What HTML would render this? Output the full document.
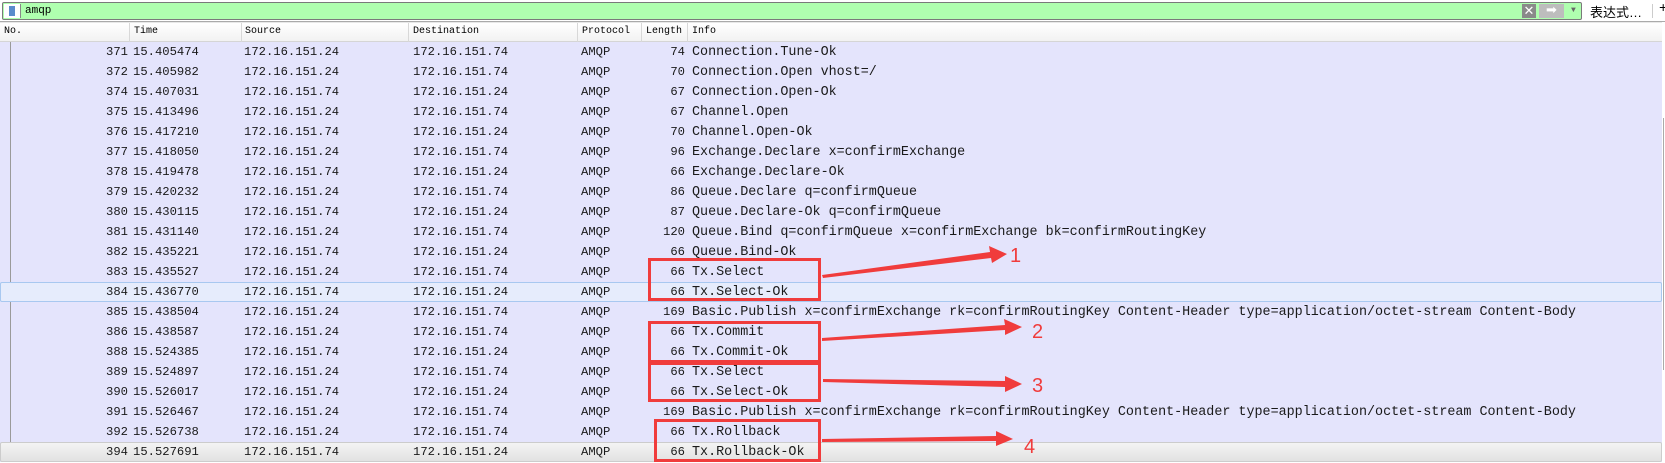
<!DOCTYPE html>
<html><head><meta charset="utf-8">
<style>
*{margin:0;padding:0;box-sizing:border-box}
body{width:1665px;height:462px;overflow:hidden;background:#fff;position:relative;font-family:"Liberation Mono",monospace}
.fb{position:absolute;left:2px;top:2px;width:1580px;height:18px;background:#afffaf;border:1px solid #7a7a7a;border-radius:2px}
.fb .bm{position:absolute;left:1px;top:1px;width:17px;height:14px;background:#fff;border-right:1px solid #888}
.fb .bm i{position:absolute;left:5px;top:2px;width:6px;height:10px;background:#5a8ccc}
.fb .t{position:absolute;left:22px;top:2px;font-size:11px;font-family:"Liberation Mono",monospace}
.hdr{position:absolute;left:0;top:22px;width:1662px;height:20px;background:linear-gradient(#fff,#f2f2f2);border-bottom:1px solid #d5d5d5;border-top:1px solid #e8e8e8}
.hdr span{position:absolute;top:3px;font-size:10px;font-family:"Liberation Mono","Noto Sans CJK SC",monospace}
.hdr b{position:absolute;top:0;width:1px;height:19px;background:#d8d8d8}
.rows{position:absolute;left:0;top:42px;width:1662px;height:420px;background:#e4e4fc}
.r{position:absolute;left:0;width:1662px;height:20px;font-size:12.2px;line-height:20px;color:#1a1a1a;white-space:pre}
.r span{position:absolute;top:0}
.r span:last-child{font-size:13.4px;top:1px}
.n{right:1534px;text-align:right}
.sel{background:#e6ecfc;border:1px solid #a8c8f0;border-radius:2px}
.gr{background:linear-gradient(#f4f4f4,#e2e2e2);border:1px solid #ccc;border-radius:2px}
.vl{position:absolute;left:10px;top:42px;width:1px;height:420px;background:#9a9a9a}
.box{position:absolute;border:3px solid #f03c3c}
</style></head><body>
<div class="fb"><div class="bm"><i></i></div><div class="t">amqp</div></div>
<div style="position:absolute;left:1522px;top:4px;width:14px;height:14px;background:#8a8a8a;color:#fff;font-size:13px;line-height:14px;text-align:center;font-family:'Liberation Sans'">✕</div>
<div style="position:absolute;left:1539px;top:4px;width:25px;height:14px;background:#bdbdbd;color:#fff;font-size:13px;line-height:14px;text-align:center">➡</div>
<div style="position:absolute;left:1571px;top:6px;font-size:8px;color:#666">▼</div>
<div style="position:absolute;left:1590px;top:2px;font-size:13px;font-family:'Liberation Sans','Noto Sans CJK SC',sans-serif">表达式…</div>
<div style="position:absolute;left:1652px;top:4px;width:1px;height:14px;background:#ccc"></div>
<div style="position:absolute;left:1659px;top:1px;font-size:14px">+</div>
<div style="position:absolute;left:0;top:21px;width:1665px;height:1px;background:#aaa"></div>
<div class="hdr">
<span style="left:4px">No.</span><b style="left:129px"></b>
<span style="left:134px">Time</span><b style="left:241px"></b>
<span style="left:245px">Source</span><b style="left:408px"></b>
<span style="left:413px">Destination</span><b style="left:577px"></b>
<span style="left:582px">Protocol</span><b style="left:641px"></b>
<span style="left:646px">Length</span><b style="left:687px"></b>
<span style="left:692px">Info</span>
</div>
<div class="rows"></div>
<div class="vl"></div>
<div style="position:absolute;left:1663px;top:118px;width:1px;height:252px;background:#aaa"></div>
<div class="r" style="top:42px"><span class="n">371</span><span style="left:133px">15.405474</span><span style="left:244px">172.16.151.24</span><span style="left:413px">172.16.151.74</span><span style="left:581px">AMQP</span><span style="right:977px">74</span><span style="left:692px">Connection.Tune-Ok</span></div>
<div class="r" style="top:62px"><span class="n">372</span><span style="left:133px">15.405982</span><span style="left:244px">172.16.151.24</span><span style="left:413px">172.16.151.74</span><span style="left:581px">AMQP</span><span style="right:977px">70</span><span style="left:692px">Connection.Open vhost=/</span></div>
<div class="r" style="top:82px"><span class="n">374</span><span style="left:133px">15.407031</span><span style="left:244px">172.16.151.74</span><span style="left:413px">172.16.151.24</span><span style="left:581px">AMQP</span><span style="right:977px">67</span><span style="left:692px">Connection.Open-Ok</span></div>
<div class="r" style="top:102px"><span class="n">375</span><span style="left:133px">15.413496</span><span style="left:244px">172.16.151.24</span><span style="left:413px">172.16.151.74</span><span style="left:581px">AMQP</span><span style="right:977px">67</span><span style="left:692px">Channel.Open</span></div>
<div class="r" style="top:122px"><span class="n">376</span><span style="left:133px">15.417210</span><span style="left:244px">172.16.151.74</span><span style="left:413px">172.16.151.24</span><span style="left:581px">AMQP</span><span style="right:977px">70</span><span style="left:692px">Channel.Open-Ok</span></div>
<div class="r" style="top:142px"><span class="n">377</span><span style="left:133px">15.418050</span><span style="left:244px">172.16.151.24</span><span style="left:413px">172.16.151.74</span><span style="left:581px">AMQP</span><span style="right:977px">96</span><span style="left:692px">Exchange.Declare x=confirmExchange</span></div>
<div class="r" style="top:162px"><span class="n">378</span><span style="left:133px">15.419478</span><span style="left:244px">172.16.151.74</span><span style="left:413px">172.16.151.24</span><span style="left:581px">AMQP</span><span style="right:977px">66</span><span style="left:692px">Exchange.Declare-Ok</span></div>
<div class="r" style="top:182px"><span class="n">379</span><span style="left:133px">15.420232</span><span style="left:244px">172.16.151.24</span><span style="left:413px">172.16.151.74</span><span style="left:581px">AMQP</span><span style="right:977px">86</span><span style="left:692px">Queue.Declare q=confirmQueue</span></div>
<div class="r" style="top:202px"><span class="n">380</span><span style="left:133px">15.430115</span><span style="left:244px">172.16.151.74</span><span style="left:413px">172.16.151.24</span><span style="left:581px">AMQP</span><span style="right:977px">87</span><span style="left:692px">Queue.Declare-Ok q=confirmQueue</span></div>
<div class="r" style="top:222px"><span class="n">381</span><span style="left:133px">15.431140</span><span style="left:244px">172.16.151.24</span><span style="left:413px">172.16.151.74</span><span style="left:581px">AMQP</span><span style="right:977px">120</span><span style="left:692px">Queue.Bind q=confirmQueue x=confirmExchange bk=confirmRoutingKey</span></div>
<div class="r" style="top:242px"><span class="n">382</span><span style="left:133px">15.435221</span><span style="left:244px">172.16.151.74</span><span style="left:413px">172.16.151.24</span><span style="left:581px">AMQP</span><span style="right:977px">66</span><span style="left:692px">Queue.Bind-Ok</span></div>
<div class="r" style="top:262px"><span class="n">383</span><span style="left:133px">15.435527</span><span style="left:244px">172.16.151.24</span><span style="left:413px">172.16.151.74</span><span style="left:581px">AMQP</span><span style="right:977px">66</span><span style="left:692px">Tx.Select</span></div>
<div class="r sel" style="top:282px;left:0"><span class="n" style="right:1533px;top:-1px">384</span><span style="left:132px;top:-1px">15.436770</span><span style="left:243px;top:-1px">172.16.151.74</span><span style="left:412px;top:-1px">172.16.151.24</span><span style="left:580px;top:-1px">AMQP</span><span style="right:976px;top:-1px">66</span><span style="left:691px;top:0">Tx.Select-Ok</span></div>
<div class="r" style="top:302px"><span class="n">385</span><span style="left:133px">15.438504</span><span style="left:244px">172.16.151.24</span><span style="left:413px">172.16.151.74</span><span style="left:581px">AMQP</span><span style="right:977px">169</span><span style="left:692px">Basic.Publish x=confirmExchange rk=confirmRoutingKey Content-Header type=application/octet-stream Content-Body</span></div>
<div class="r" style="top:322px"><span class="n">386</span><span style="left:133px">15.438587</span><span style="left:244px">172.16.151.24</span><span style="left:413px">172.16.151.74</span><span style="left:581px">AMQP</span><span style="right:977px">66</span><span style="left:692px">Tx.Commit</span></div>
<div class="r" style="top:342px"><span class="n">388</span><span style="left:133px">15.524385</span><span style="left:244px">172.16.151.74</span><span style="left:413px">172.16.151.24</span><span style="left:581px">AMQP</span><span style="right:977px">66</span><span style="left:692px">Tx.Commit-Ok</span></div>
<div class="r" style="top:362px"><span class="n">389</span><span style="left:133px">15.524897</span><span style="left:244px">172.16.151.24</span><span style="left:413px">172.16.151.74</span><span style="left:581px">AMQP</span><span style="right:977px">66</span><span style="left:692px">Tx.Select</span></div>
<div class="r" style="top:382px"><span class="n">390</span><span style="left:133px">15.526017</span><span style="left:244px">172.16.151.74</span><span style="left:413px">172.16.151.24</span><span style="left:581px">AMQP</span><span style="right:977px">66</span><span style="left:692px">Tx.Select-Ok</span></div>
<div class="r" style="top:402px"><span class="n">391</span><span style="left:133px">15.526467</span><span style="left:244px">172.16.151.24</span><span style="left:413px">172.16.151.74</span><span style="left:581px">AMQP</span><span style="right:977px">169</span><span style="left:692px">Basic.Publish x=confirmExchange rk=confirmRoutingKey Content-Header type=application/octet-stream Content-Body</span></div>
<div class="r" style="top:422px"><span class="n">392</span><span style="left:133px">15.526738</span><span style="left:244px">172.16.151.24</span><span style="left:413px">172.16.151.74</span><span style="left:581px">AMQP</span><span style="right:977px">66</span><span style="left:692px">Tx.Rollback</span></div>
<div class="r gr" style="top:442px"><span class="n" style="right:1533px;top:-1px">394</span><span style="left:132px;top:-1px">15.527691</span><span style="left:243px;top:-1px">172.16.151.74</span><span style="left:412px;top:-1px">172.16.151.24</span><span style="left:580px;top:-1px">AMQP</span><span style="right:976px;top:-1px">66</span><span style="left:691px;top:0">Tx.Rollback-Ok</span></div>
<div class="box" style="left:648px;top:258px;width:173px;height:43px"></div>
<div class="box" style="left:648px;top:321px;width:173px;height:42px"></div>
<div class="box" style="left:648px;top:362px;width:173px;height:40px"></div>
<div class="box" style="left:654px;top:419px;width:167px;height:43px"></div>
<svg style="position:absolute;left:0;top:0" width="1665" height="462">
<g fill="#f03c3c">
<polygon points="822,275 990,252 989,246 1007,254 992,263 991,258 823,278"/>
<polygon points="822,338 1005,325 1004,319 1022,327 1005,335 1005,330 822,341"/>
<polygon points="823,379 1005,381 1005,376 1022,384 1005,392 1005,387 823,382"/>
<polygon points="822,439 996,436 996,431 1013,439 996,446 996,441 822,442"/>
</g>
<g fill="#f03c3c" font-family="Liberation Sans, sans-serif" font-size="20">
<text x="1010" y="262">1</text>
<text x="1032" y="338">2</text>
<text x="1032" y="392">3</text>
<text x="1024" y="453">4</text>
</g>
</svg>
</body></html>
